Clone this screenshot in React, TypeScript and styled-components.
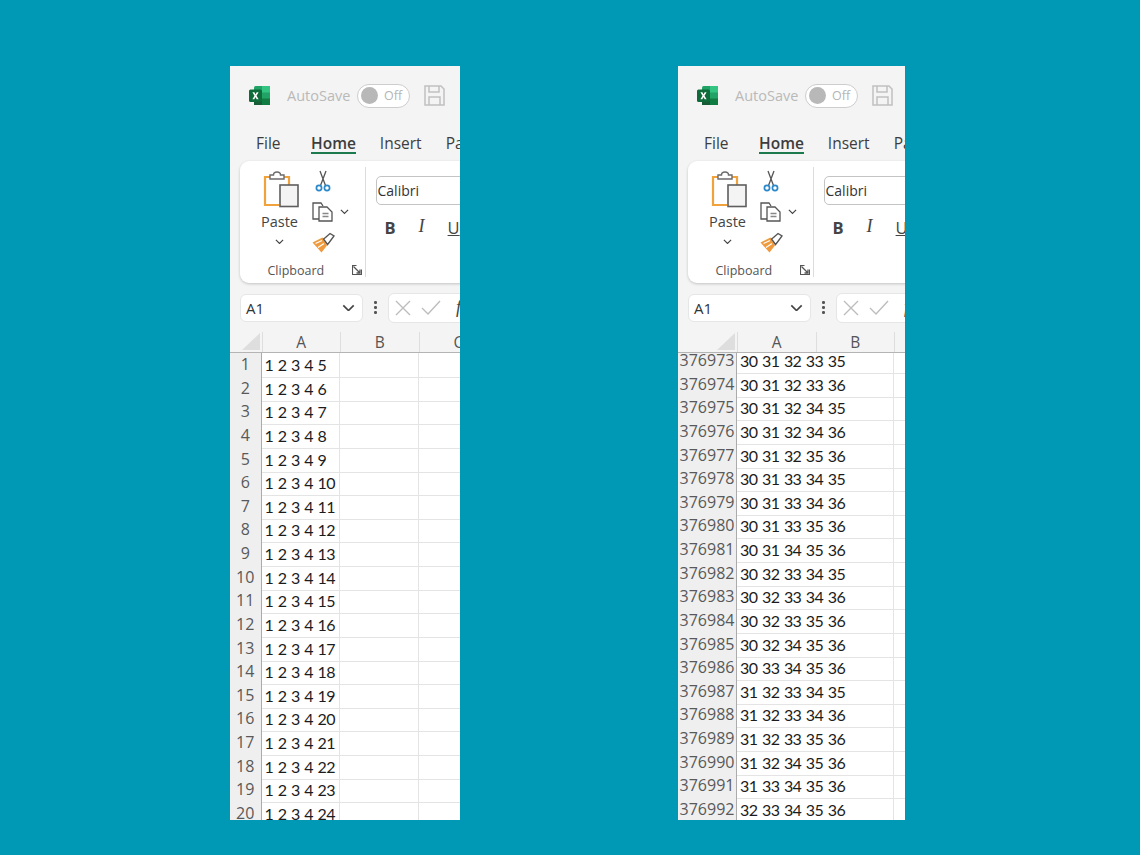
import { FC } from 'react';
import styled, { createGlobalStyle } from 'styled-components';

const GlobalStyle = createGlobalStyle`
  html, body { margin: 0; padding: 0; background: #0099b5; }
  body { font-family: "Open Sans", "Liberation Sans", sans-serif; }
`;

const Page = styled.div`
  width: 1140px;
  height: 855px;
  box-sizing: border-box;
  padding: 66px 0 0 230px;
  display: flex;
  align-items: flex-start;
  gap: 218px;
  background: #0099b5;
  overflow: hidden;
`;

const Window = styled.div<{ $width: number }>`
  width: ${p => p.$width}px;
  height: 754px;
  background: #f4f4f4;
  overflow: hidden;
  flex: none;
`;

const TitleBar = styled.div`
  height: 59px;
  width: 300px;
  display: flex;
  align-items: center;
  padding-left: 19px;
  color: #b9b9b9;
`;

const AutoSave = styled.span`
  font-size: 14.5px;
  margin-left: 17px;
  width: 70px;
  white-space: nowrap;
`;

const Toggle = styled.div`
  width: 53px;
  height: 24px;
  box-sizing: border-box;
  border: 1.5px solid #cdcdcd;
  border-radius: 12px;
  background: #fff;
  display: flex;
  align-items: center;
  padding-left: 3px;
  gap: 6px;
  font-size: 12.5px;
  color: #b5b5b5;
`;

const Knob = styled.span`
  width: 17px;
  height: 17px;
  border-radius: 50%;
  background: #b8b8b8;
`;

const SaveSlot = styled.span`
  margin-left: 14px;
  display: flex;
`;

const Tabs = styled.div`
  display: flex;
  width: 300px;
  height: 36px;
  padding-left: 26px;
  gap: 24px;
  font-size: 15.5px;
  color: #3d3d3d;
`;

const Tab = styled.div<{ $active?: boolean }>`
  height: 29px;
  box-sizing: border-box;
  line-height: 37px;
  white-space: nowrap;
  font-weight: ${p => (p.$active ? 600 : 400)};
  border-bottom: ${p => (p.$active ? '2.5px solid #1d7a4c' : 'none')};
  &:first-child { margin-right: 6.5px; }
`;

const Ribbon = styled.div`
  margin-left: 9.5px;
  width: 300px;
  height: 122px;
  background: #fff;
  border-radius: 9px;
  box-shadow: 0 1px 3px rgba(0, 0, 0, 0.2);
  display: flex;
  padding: 6px 0;
  box-sizing: border-box;
`;

const ClipboardGroup = styled.div`
  width: 126px;
  flex: none;
  border-right: 1px solid #dcdcdc;
  box-sizing: border-box;
  display: grid;
  grid-template-columns: 61px 1fr;
  grid-template-rows: 1fr 20px;
`;

const PasteColumn = styled.div`
  display: flex;
  flex-direction: column;
  align-items: center;
  padding-left: 19px;
  font-size: 14.5px;
  color: #444;
  line-height: 18px;
  padding-top: 4px;
  svg:first-child { margin: 0 0 4px 5px; }
  svg:last-child { margin-top: 8px; }
`;

const SmallTools = styled.div`
  display: flex;
  flex-direction: column;
  align-items: flex-start;
  padding: 3px 0 0 11px;
  gap: 10px;
  & > svg:first-child { margin-left: 3px; }
`;

const ToolRow = styled.div`
  display: flex;
  align-items: center;
  gap: 7px;
`;

const GroupFooter = styled.div`
  grid-column: 1 / 3;
  display: flex;
  align-items: center;
  justify-content: space-between;
  font-size: 12.5px;
  color: #555;
  padding: 6px 3px 0 28px;
`;

const FontGroup = styled.div`
  padding: 9px 0 0 10px;
  display: flex;
  flex-direction: column;
`;

const FontBox = styled.div`
  width: 160px;
  height: 29px;
  box-sizing: border-box;
  border: 1px solid #c4c4c4;
  border-radius: 5px;
  font-size: 14px;
  line-height: 27px;
  padding-left: 1px;
  color: #333;
`;

const FormatRow = styled.div`
  display: flex;
  margin-top: 11px;
  padding-left: 9px;
  gap: 23px;
  font-size: 16.5px;
  color: #444;
`;

const FormatKey = styled.span<{ $kind: 'b' | 'i' | 'u' }>`
  font-family: ${p => (p.$kind === 'i' ? '"Liberation Serif", serif' : 'inherit')};
  font-weight: ${p => (p.$kind === 'b' ? 700 : 400)};
  font-style: ${p => (p.$kind === 'i' ? 'italic' : 'normal')};
  font-size: ${p => (p.$kind === 'i' ? '18px' : 'inherit')};
  text-decoration: ${p => (p.$kind === 'u' ? 'underline' : 'none')};
`;

const FormulaBar = styled.div`
  display: flex;
  align-items: center;
  width: 300px;
  height: 29px;
  margin: 10px 0 10px 10px;
`;

const NameBox = styled.div`
  width: 123px;
  height: 28px;
  box-sizing: border-box;
  background: #fff;
  border: 1px solid #e6e6e6;
  border-radius: 6px;
  display: flex;
  align-items: center;
  justify-content: space-between;
  padding: 0 7px 0 5px;
  font-size: 15px;
  color: #333;
  flex: none;
`;

const Dots = styled.div`
  width: 25px;
  flex: none;
  display: flex;
  flex-direction: column;
  align-items: center;
  gap: 2.5px;
  span {
    width: 2.5px;
    height: 2.5px;
    background: #555;
    border-radius: 50%;
  }
`;

const FormulaBox = styled.div`
  width: 160px;
  height: 28px;
  background: #fff;
  border: 1px solid #e6e6e6;
  border-radius: 6px;
  display: flex;
  align-items: center;
  padding-left: 5px;
  gap: 9px;
  flex: none;
  font-family: "Liberation Serif", serif;
  font-style: italic;
  font-size: 18px;
  color: #444;
  span { margin-left: 6px; }
`;

const Sheet = styled.div`
  background: #fff;
  height: 468px;
  overflow: hidden;
`;

const HeaderRow = styled.div<{ $head: number }>`
  display: grid;
  grid-template-columns: ${p => p.$head}px 78.5px 78.5px 79px;
  height: 21px;
  box-sizing: border-box;
  background: #f4f4f4;
  border-bottom: 1px solid #b4b4b4;
`;

const Corner = styled.div`
  display: flex;
  justify-content: flex-end;
  align-items: flex-end;
  padding: 0 2px 2px 0;
`;

const ColName = styled.div`
  text-align: center;
  font-size: 15.5px;
  line-height: 20px;
  color: #555;
  border-left: 1px solid #dedede;
`;

const Rows = styled.div<{ $scroll: number }>`
  margin-top: -${p => p.$scroll}px;
`;

const Row = styled.div<{ $head: number }>`
  display: grid;
  grid-template-columns: ${p => p.$head}px 78.5px 78.5px 79px;
  height: 23.63px;
  box-sizing: border-box;
`;

const RowNum = styled.div`
  background: #efefef;
  border-right: 1px solid #ababab;
  border-bottom: 1px solid #e2e2e2;
  text-align: center;
  font-size: 16px;
  line-height: 23px;
  color: #595959;
`;

// long values run on over the next column, as they do in a real sheet
const Cell = styled.div<{ $spill?: boolean }>`
  border-right: ${p => (p.$spill ? 'none' : '1px solid #e4e4e4')};
  border-bottom: 1px solid #e4e4e4;
  font-family: Lato, "Liberation Sans", sans-serif;
  font-size: 16px;
  letter-spacing: -0.6px;
  word-spacing: 1.1px;
  line-height: 24px;
  padding-left: 3px;
  color: #1c1c1c;
  white-space: nowrap;
`;

const ExcelLogo = () => (
  <svg width="21" height="21" viewBox="0 0 21 21">
    <rect x="5" y="1" width="16" height="19" rx="1.5" fill="#21a366" />
    <rect x="13" y="1" width="8" height="6.5" fill="#33c481" />
    <rect x="13" y="13.5" width="8" height="6.5" fill="#107c41" />
    <rect x="5" y="13.5" width="8" height="6.5" fill="#185c37" />
    <rect x="0" y="4.5" width="13" height="12.5" rx="1.5" fill="#0f6b3a" />
    <path d="M3.4 7.2h2l1.1 2.2 1.2-2.2h1.9l-2.1 3.5 2.1 3.6H7.7l-1.2-2.3-1.2 2.3H3.4l2.1-3.6z" fill="#fff" />
  </svg>
);

const SaveIcon = () => (
  <svg width="21" height="21" viewBox="0 0 21 21" fill="none" stroke="#c0c0c0" strokeWidth="1.5">
    <path d="M1 1h16l3 3v16H1z" />
    <path d="M5 1v6h10V1M5 20v-8h11v8" />
  </svg>
);

const ClipboardIcon = () => (
  <svg width="38" height="38" viewBox="0 0 38 38" fill="none">
    <path d="M9 6H2v28h14" stroke="#f0a33c" strokeWidth="2.2" />
    <path d="M19 6h7v8" stroke="#f0a33c" strokeWidth="2.2" />
    <path d="M7 8V4h3.5a3.5 3 0 0 1 7 0H21v4z" fill="#fff" stroke="#6b6b6b" strokeWidth="1.4" />
    <rect x="17" y="14" width="18" height="21.5" fill="#f4f4f4" stroke="#5e5e5e" strokeWidth="1.6" />
  </svg>
);

const ScissorsIcon = () => (
  <svg width="16" height="22" viewBox="0 0 16 22" fill="none">
    <path d="M5.5 15.5 11 1M10.5 15.5 5 1" stroke="#555" strokeWidth="1.3" />
    <circle cx="4" cy="18" r="2.6" stroke="#2b88c9" strokeWidth="1.7" />
    <circle cx="12" cy="18" r="2.6" stroke="#2b88c9" strokeWidth="1.7" />
  </svg>
);

const CopyIcon = () => (
  <svg width="21" height="20" viewBox="0 0 21 20" fill="none" stroke="#555" strokeWidth="1.3">
    <path d="M7 17H1V1h8l2 3" />
    <path d="M7 5h8l5 5v9H7z" fill="#fff" />
    <path d="M10.5 11.5h6M10.5 14.5h6" stroke="#888" />
  </svg>
);

const BrushIcon = () => (
  <svg width="23" height="21" viewBox="0 0 23 21">
    <path d="M0.5 10.5 10.5 5.5l4.5 8-5.5 7z" fill="#ef9a3d" />
    <path d="M3.5 11.5 10 8.5M6 15.5l6-4" stroke="#fff" strokeWidth="1.2" />
    <path d="M11.5 7 13.5 5.5 18 1.5l4 2.5-4.5 6-2 2.5z" fill="#fff" stroke="#555" strokeWidth="1.4" />
  </svg>
);

const Launcher = () => (
  <svg width="10" height="10" viewBox="0 0 10 10" fill="none" stroke="#555" strokeWidth="1.1">
    <path d="M9.5 4.5v5h-9v-9h4" />
    <path d="M1.5 1.5 8 8M4.5 8H8V4.5" strokeWidth="1.3" />
  </svg>
);

const Chevron: FC<{ size?: number }> = ({ size = 10 }) => (
  <svg width={size} height={size * 0.6} viewBox="0 0 10 6" fill="none" stroke="#444" strokeWidth="1.3">
    <path d="M1 1l4 4 4-4" />
  </svg>
);

const CrossIcon = () => (
  <svg width="18" height="18" viewBox="0 0 18 18" fill="none" stroke="#bdbdbd" strokeWidth="1.4">
    <path d="M2 2l14 14M16 2 2 16" />
  </svg>
);

const CheckIcon = () => (
  <svg width="20" height="16" viewBox="0 0 20 16" fill="none" stroke="#bdbdbd" strokeWidth="1.4">
    <path d="M1 8l6 6L19 1" />
  </svg>
);

const CornerMark = () => (
  <svg width="18" height="17" viewBox="0 0 18 17">
    <path d="M18 0v17H0z" fill="#dedede" />
  </svg>
);

interface SheetData {
  width: number;
  head: number;
  scroll: number;
  spill?: boolean;
  rows: [string, string][];
}

const leftRows: [string, string][] = Array.from({ length: 20 }, (_, i) => [
  String(i + 1),
  `1 2 3 4 ${i + 5}`,
]);

const rightValues = [
  '30 31 32 33 35', '30 31 32 33 36', '30 31 32 34 35', '30 31 32 34 36', '30 31 32 35 36',
  '30 31 33 34 35', '30 31 33 34 36', '30 31 33 35 36', '30 31 34 35 36', '30 32 33 34 35',
  '30 32 33 34 36', '30 32 33 35 36', '30 32 34 35 36', '30 33 34 35 36', '31 32 33 34 35',
  '31 32 33 34 36', '31 32 33 35 36', '31 32 34 35 36', '31 33 34 35 36', '32 33 34 35 36',
];

const rightRows: [string, string][] = rightValues.map((v, i) => [String(376973 + i), v]);

const ExcelWindow: FC<SheetData> = ({ width, head, scroll, spill, rows }) => (
  <Window $width={width}>
    <TitleBar>
      <ExcelLogo />
      <AutoSave>AutoSave</AutoSave>
      <Toggle><Knob />Off</Toggle>
      <SaveSlot><SaveIcon /></SaveSlot>
    </TitleBar>
    <Tabs>
      <Tab>File</Tab>
      <Tab $active>Home</Tab>
      <Tab>Insert</Tab>
      <Tab>Page</Tab>
    </Tabs>
    <Ribbon>
      <ClipboardGroup>
        <PasteColumn>
          <ClipboardIcon />
          Paste
          <Chevron size={9} />
        </PasteColumn>
        <SmallTools>
          <ScissorsIcon />
          <ToolRow><CopyIcon /><Chevron size={9} /></ToolRow>
          <BrushIcon />
        </SmallTools>
        <GroupFooter>Clipboard<Launcher /></GroupFooter>
      </ClipboardGroup>
      <FontGroup>
        <FontBox>Calibri</FontBox>
        <FormatRow>
          <FormatKey $kind="b">B</FormatKey>
          <FormatKey $kind="i">I</FormatKey>
          <FormatKey $kind="u">U</FormatKey>
        </FormatRow>
      </FontGroup>
    </Ribbon>
    <FormulaBar>
      <NameBox>A1<Chevron size={13} /></NameBox>
      <Dots><span /><span /><span /></Dots>
      <FormulaBox><CrossIcon /><CheckIcon /><span>f</span></FormulaBox>
    </FormulaBar>
    <HeaderRow $head={head}>
      <Corner><CornerMark /></Corner>
      <ColName>A</ColName>
      <ColName>B</ColName>
      <ColName>C</ColName>
    </HeaderRow>
    <Sheet>
      <Rows $scroll={scroll}>
        {rows.map(([num, value]) => (
          <Row key={num} $head={head}>
            <RowNum>{num}</RowNum>
            <Cell $spill={spill}>{value}</Cell>
            <Cell />
            <Cell />
          </Row>
        ))}
      </Rows>
    </Sheet>
  </Window>
);

const App: FC = () => (
  <Page>
    <GlobalStyle />
    <ExcelWindow width={230} head={31.5} scroll={0} rows={leftRows} />
    <ExcelWindow width={227} head={59} scroll={4} spill rows={rightRows} />
  </Page>
);

export default App;
